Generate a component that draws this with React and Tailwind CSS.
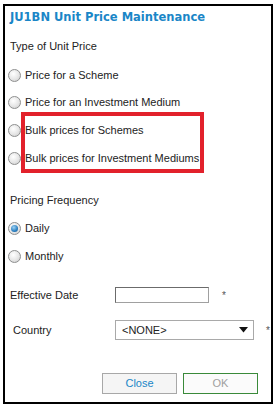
import React from "react";

function Radio({ checked }) {
  return (
    <span className="relative inline-flex h-[13px] w-[13px] shrink-0 items-center justify-center rounded-full border border-[#8e8f8f] bg-[radial-gradient(circle_at_40%_35%,#ffffff_0%,#e6e6e6_55%,#c9c9c9_100%)]">
      {checked && (
        <span className="h-[7px] w-[7px] rounded-full bg-[radial-gradient(circle_at_40%_35%,#9fd3f5_0%,#2a7fc0_60%,#0f4f8a_100%)]" />
      )}
    </span>
  );
}

function RadioRow({ label, checked, className = "" }) {
  return (
    <div className={"flex h-[20px] items-center gap-[4px] pl-[3px] " + className}>
      <Radio checked={checked} />
      <span>{label}</span>
    </div>
  );
}

export default function App() {
  return (
    <div className="relative h-[408px] w-[278px] bg-white text-[11px] text-[#222] [font-family:'Liberation_Sans',Arial,sans-serif]">
      <div className="absolute left-[3px] top-[4px] flex h-[400px] w-[270px] flex-col border-2 border-black">
        <div className="mt-[4px] flex h-[16px] items-center pl-[5px] text-[11.5px] font-bold text-[#1a86c7] [font-family:'DejaVu_Sans',Verdana,sans-serif]">
          JU1BN Unit Price Maintenance
        </div>
        <div className="mt-[12px] flex h-[16px] items-center pl-[5px]">Type of Unit Price</div>
        <RadioRow className="mt-[11px]" label="Price for a Scheme" />
        <RadioRow className="mt-[7px]" label="Price for an Investment Medium" />
        <RadioRow className="mt-[8px]" label="Bulk prices for Schemes" />
        <RadioRow className="mt-[8px]" label="Bulk prices for Investment Mediums" />
        <div className="mt-[24px] flex h-[16px] items-center pl-[5px]">Pricing Frequency</div>
        <RadioRow className="mt-[10px]" label="Daily" checked />
        <RadioRow className="mt-[8px]" label="Monthly" />
        <div className="mt-[21px] flex h-[16px] items-center pl-[5px]">
          <span className="w-[105px]">Effective Date</span>
          <div className="h-[16px] w-[94px] border border-[#a0a0a0] border-t-[#6b6b6b] border-l-[#6b6b6b] bg-white" />
          <span className="ml-[13px] text-[10px] text-[#555]">*</span>
        </div>
        <div className="mt-[17px] flex h-[20px] items-center pl-[8px]">
          <span className="w-[102px]">Country</span>
          <div className="flex h-[20px] w-[139px] items-center justify-between border border-[#a9a9a9] bg-white pl-[6px] pr-[5px] text-[11px]">
            <span>&lt;NONE&gt;</span>
            <svg width="9" height="6" viewBox="0 0 9 6"><path d="M0 0h9L4.5 5.5z" fill="#111" /></svg>
          </div>
          <span className="ml-[12px] text-[10px] text-[#555]">*</span>
        </div>
        <div className="mt-[33px] flex justify-end gap-[6px] pr-[13px]">
          <button className="h-[21px] w-[75px] border border-[#a8a8a8] bg-[#f5f5f5] text-[11px] text-[#1a86c7]">Close</button>
          <button className="h-[21px] w-[75px] border border-[#3a8a3a] bg-[#fbfbfb] text-[11px] text-[#a0a0a0]">OK</button>
        </div>
      </div>
      <div className="absolute left-[21px] top-[112px] h-[61px] w-[183px] border-[4px] border-[#e2212b]" />
    </div>
  );
}
